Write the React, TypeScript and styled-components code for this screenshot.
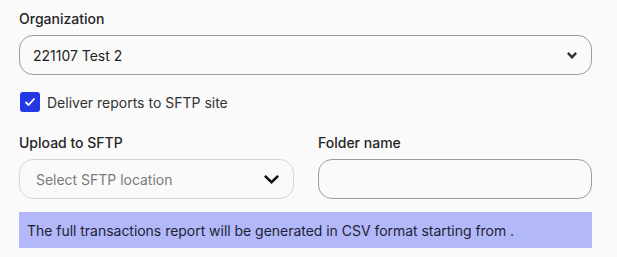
import React from "react";
import styled, { createGlobalStyle } from "styled-components";

const Global = createGlobalStyle`
  html, body { margin: 0; padding: 0; background: #fafafa; }
  body { font-family: Inter, "Noto Sans", sans-serif; color: #222; }
`;

const Page = styled.div`
  width: 617px;
  height: 257px;
  box-sizing: border-box;
  padding: 9px 25px 0 19px;
  display: flex;
  flex-direction: column;
`;

const Label = styled.div`
  font-size: 14px;
  font-weight: 500;
  line-height: 20px;
  color: #252525;
  margin-bottom: 6px;
`;

const Select = styled.div<{ $light?: boolean }>`
  height: 40px;
  box-sizing: border-box;
  border: 1px solid ${(p) => (p.$light ? "#d6d6d6" : "#9c9c9c")};
  border-radius: 14px;
  display: flex;
  align-items: center;
  justify-content: space-between;
  padding: 0 14px 0 ${(p) => (p.$light ? "16px" : "13px")};
  font-size: 14px;
  letter-spacing: -0.02px;
  color: ${(p) => (p.$light ? "#7a7a7a" : "#222")};
`;

const Input = styled.div`
  height: 40px;
  box-sizing: border-box;
  border: 1px solid #9c9c9c;
  border-radius: 14px;
`;

const CheckRow = styled.label`
  display: flex;
  align-items: center;
  gap: 7px;
  margin-top: 17px;
  font-size: 14px;
  color: #333;
`;

const Box = styled.span`
  width: 20px;
  height: 20px;
  border-radius: 3px;
  background: #2438e6;
  display: flex;
  align-items: center;
  justify-content: center;
  margin-left: 1px;
`;

const Columns = styled.div`
  display: grid;
  grid-template-columns: 275px 274px;
  column-gap: 24px;
  margin-top: 21px;
`;

const Info = styled.div`
  margin-top: 13px;
  height: 36px;
  background: #b2b8fa;
  display: flex;
  align-items: center;
  padding-left: 8px;
  font-size: 14px;
  letter-spacing: -0.03px;
  color: #1f1f33;
`;

const Chevron = ({ w, h, sw, color }: { w: number; h: number; sw: number; color: string }) => (
  <svg width={w} height={h} viewBox={`0 0 ${w} ${h}`}>
    <polyline
      points={`${sw / 2 + 0.5},${sw / 2 + 0.5} ${w / 2},${h - sw / 2 - 0.5} ${w - sw / 2 - 0.5},${sw / 2 + 0.5}`}
      fill="none"
      stroke={color}
      strokeWidth={sw}
      strokeLinecap="square"
    />
  </svg>
);

export default function App() {
  return (
    <>
      <Global />
      <Page>
        <Label>Organization</Label>
        <Select>
          <span>221107 Test 2</span>
          <Chevron w={10} h={7} sw={2.5} color="#333" />
        </Select>
        <CheckRow>
          <Box>
            <svg width="12" height="10" viewBox="0 0 12 10">
              <polyline points="1.5,5 4.5,8 10.5,1.5" fill="none" stroke="#fff" strokeWidth="1.8" />
            </svg>
          </Box>
          Deliver reports to SFTP site
        </CheckRow>
        <Columns>
          <div>
            <Label>Upload to SFTP</Label>
            <Select $light>
              <span>Select SFTP location</span>
              <Chevron w={15} h={9} sw={2.5} color="#111" />
            </Select>
          </div>
          <div>
            <Label>Folder name</Label>
            <Input />
          </div>
        </Columns>
        <Info>The full transactions report will be generated in CSV format starting from .</Info>
      </Page>
    </>
  );
}
